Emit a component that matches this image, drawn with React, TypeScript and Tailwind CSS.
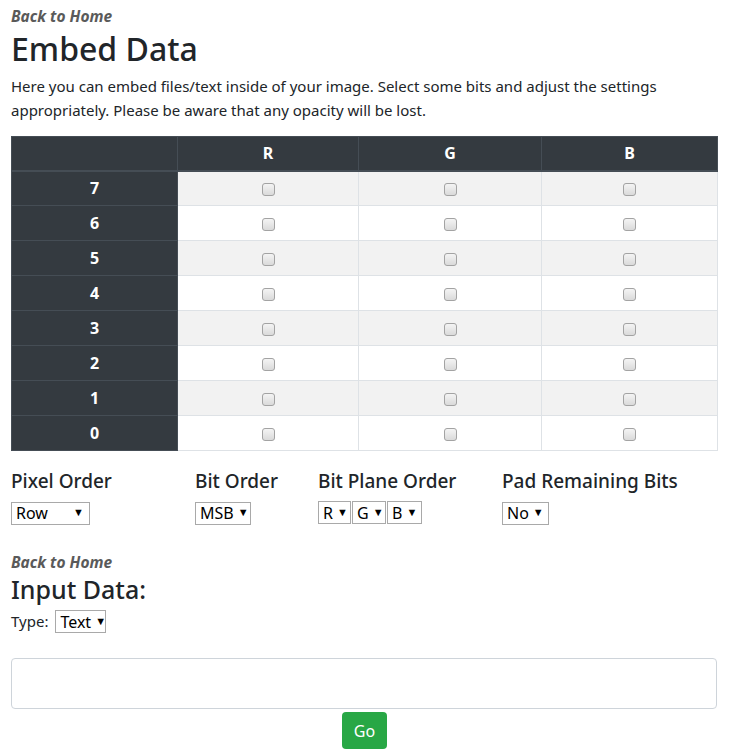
import React from "react";

const font = { fontFamily: '"Noto Sans", "Open Sans", sans-serif' };

function Check() {
  return (
    <span className="inline-block w-[13px] h-[13px] rounded-[3px] border border-[#a3a3a3] bg-gradient-to-b from-[#f4f4f4] to-[#dadada] align-middle" />
  );
}

function Sel({ label, w }: { label: string; w: string }) {
  return (
    <span
      className={`inline-flex items-center justify-between h-[23px] border border-[#a9a9a9] bg-white pl-[4px] pr-[5px] text-[16px] leading-none text-black ${w}`}
    >
      <span>{label}</span>
      <span className="text-[11px] ml-[4px] -mt-[3px]">▼</span>
    </span>
  );
}

export default function App() {
  const rows = [7, 6, 5, 4, 3, 2, 1, 0];
  return (
    <div className="bg-white min-h-[754px] px-[11px] text-[#212529]" style={font}>
      <div className="pt-[5px] text-[15.5px] leading-[22px] italic font-bold text-[#5a5a5a]">Back to Home</div>
      <h1 className="text-[32px] leading-[41px] font-medium mt-[1px]">Embed Data</h1>
      <p className="text-[15px] leading-[23.5px] mt-[6px] text-[#212529]">
        Here you can embed files/text inside of your image. Select some bits and adjust the settings appropriately. Please be aware that any opacity will be lost.
      </p>
      <table className="w-[706px] mt-[14px] table-fixed border-collapse text-[16px]">
        <colgroup>
          <col className="w-[166px]" />
          <col className="w-[181px]" />
          <col className="w-[183px]" />
          <col className="w-[176px]" />
        </colgroup>
        <thead>
          <tr className="h-[34px] bg-[#343a40] text-white">
            <th className="border border-[#454d55] border-b-2"></th>
            <th className="border border-[#454d55] border-b-2 font-bold">R</th>
            <th className="border border-[#454d55] border-b-2 font-bold">G</th>
            <th className="border border-[#454d55] border-b-2 font-bold">B</th>
          </tr>
        </thead>
        <tbody>
          {rows.map((r, i) => (
            <tr key={r} className={`h-[35px] ${i % 2 === 0 ? "bg-[#f2f2f2]" : "bg-white"}`}>
              <th className="bg-[#343a40] text-white font-bold border border-[#454d55]">{r}</th>
              <td className="border border-[#dee2e6] text-center"><Check /></td>
              <td className="border border-[#dee2e6] text-center"><Check /></td>
              <td className="border border-[#dee2e6] text-center"><Check /></td>
            </tr>
          ))}
        </tbody>
      </table>
      <div className="flex mt-[18px]">
        <div className="w-[184px]">
          <div className="text-[19px] leading-[24px] font-medium">Pixel Order</div>
          <div className="mt-[8px]"><Sel label="Row" w="w-[79px]" /></div>
        </div>
        <div className="w-[123px]">
          <div className="text-[19px] leading-[24px] font-medium">Bit Order</div>
          <div className="mt-[8px]"><Sel label="MSB" w="w-[56px]" /></div>
        </div>
        <div className="w-[184px]">
          <div className="text-[19px] leading-[24px] font-medium">Bit Plane Order</div>
          <div className="mt-[8px] flex gap-[1px]">
            <Sel label="R" w="w-[33px]" />
            <Sel label="G" w="w-[34px]" />
            <Sel label="B" w="w-[35px]" />
          </div>
        </div>
        <div>
          <div className="text-[19px] leading-[24px] font-medium">Pad Remaining Bits</div>
          <div className="mt-[8px]"><Sel label="No" w="w-[47px]" /></div>
        </div>
      </div>
      <div className="mt-[27px] text-[15.5px] leading-[20px] italic font-bold text-[#5a5a5a]">Back to Home</div>
      <h2 className="text-[25px] leading-[30px] font-medium mt-[2px]">Input Data:</h2>
      <div className="flex items-center mt-[6px] text-[15px]">
        <span className="mr-[7px]">Type:</span>
        <Sel label="Text" w="w-[51px]" />
      </div>
      <textarea className="block w-[706px] h-[51px] mt-[25px] border border-[#ced4da] rounded-[4px] resize-none outline-none" />
      <div className="flex justify-center mt-[3px]">
        <button className="h-[37px] px-[12px] bg-[#28a745] text-white text-[16px] rounded-[4px]">Go</button>
      </div>
    </div>
  );
}
